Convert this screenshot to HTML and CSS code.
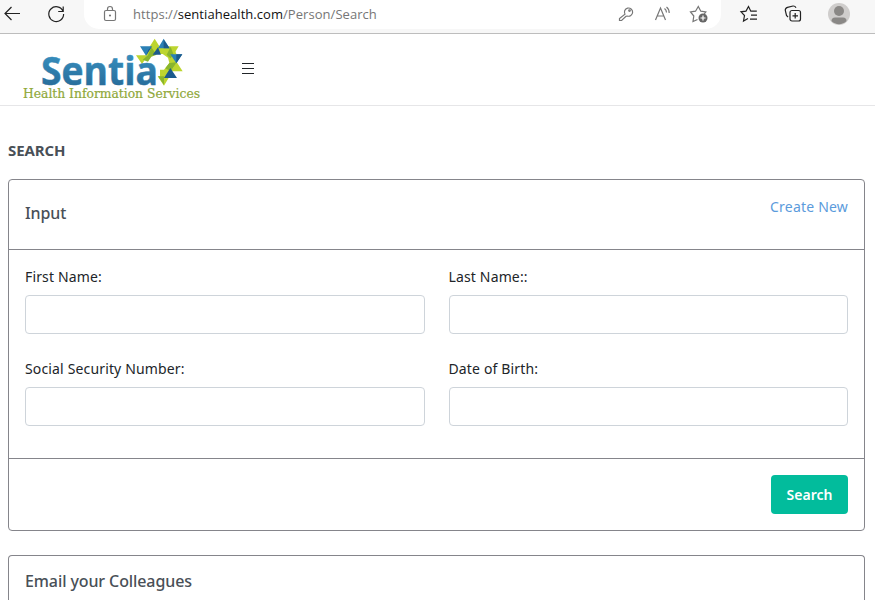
FILE: index.html
```html
<!DOCTYPE html>
<html lang="en">
<head>
    <meta charset="UTF-8">
    <meta name="viewport" content="width=device-width, initial-scale=1.0">
    <title>Person Search</title>
    <link rel="stylesheet" href="styles.css">
</head>
<body>
    <div class="browser-bar">
        <svg class="icon back" width="20" height="20" viewBox="0 0 20 20"><path d="M18 9.500H2.500M9.500 3L3 9.500 9.500 16"/></svg>
        <svg class="icon reload" width="20" height="20" viewBox="0 0 20 20"><path d="M17 7.2A7.4 7.4 0 1 0 17.6 10M17.2 2.5v5h-5"/></svg>
        <div class="address">
            <svg class="icon lock" width="14" height="18" viewBox="0 0 14 18"><rect x="1.500" y="5.500" width="11" height="10" rx="1.500"/><path d="M4.500 5.500V4a2.500 2.500 0 0 1 5 0v1.500"/><circle cx="7" cy="10.500" r=".5"/></svg>
            <div class="url">https://<span>sentiahealth.com</span>/Person/Search</div>
            <svg class="icon key" width="16" height="16" viewBox="0 0 16 16"><path d="M7 8.200A4.100 4.100 0 1 1 9.200 10L8 10.200 3.600 14.500H1.500v-2z"/><circle cx="11.500" cy="4.600" r=".8"/></svg>
            <svg class="icon read" width="18" height="18" viewBox="0 0 18 18"><path d="M2.500 15L7.500 3l5 12M4.200 11h6.600M11.500 3.500q2 1.500 2 4M13.500 2q2.700 2 2.700 6"/></svg>
            <svg class="icon star" width="20" height="20" viewBox="0 0 20 20"><path d="M8.500 15.500l-4.500 2 .8-5.500L1.500 8l5-.8L9.300 2.500l2.500 4.700 5 .8-1.500 1.800"/><circle class="dot" cx="14" cy="14" r="4.500"/><path class="plus" d="M14 11.500v5M11.500 14h5"/></svg>
        </div>
        <svg class="icon favorites" width="20" height="20" viewBox="0 0 20 20"><path d="M9 14.500L4.500 17l1-5.500L2 7.800l5-.7L9.500 2.500 11.800 7.200h6M12 11.200h6M11 15.200h7"/></svg>
        <svg class="icon collections" width="20" height="20" viewBox="0 0 20 20"><rect x="6" y="6.500" width="10.500" height="10.500" rx="2"/><path d="M11.200 9v5.500M8.500 11.800H14M4 13L2.500 11.500 1.300 6.500Q1 4 3.500 3.300L9 2q2-.2 3 1.800"/></svg>
        <svg class="avatar" width="22" height="22" viewBox="0 0 22 22"><circle cx="11" cy="11" r="11" fill="#cfcdcc"/><circle cx="11" cy="8" r="5" fill="#8a8886"/><path d="M3.500 18q0-3.500 3.500-3.500h8q3.500 0 3.500 3.500a10.500 10.500 0 0 1-15 0z" fill="#8a8886"/></svg>
    </div>

    <header class="site-header">
        <svg class="logo" width="180" height="66" viewBox="22 36 180 66">
            <defs>
                <linearGradient id="wordmark" x1="0" y1="0" x2="0" y2="1">
                    <stop offset="0" stop-color="#3d9bcb"/>
                    <stop offset="1" stop-color="#23628f"/>
                </linearGradient>
            </defs>
            <g transform="translate(136 37) scale(.3333)">
                <path fill="#bdd52f" d="M38 34L56 5l18 29zM92 28h36l-16 27zM0 55h36L18 81zM104 103h36l-18-28zM65 118h36l-17 28z"/>
                <path fill="#bdd52f" d="M30 30h82l11 25v22l-18 26-10 18H72V98h12l16-20-4-16-16-11H56L42 60 30 55z"/>
                <path fill="#8ab52d" d="M36 55l10-24 16 22-16 6-10 15-16-6zM92 53l12-24 9 25-10 10zM100 78l22-2-18 27-16-9zM66 118h18v26z"/>
                <path fill="#2b80b5" d="M66 34L83 5l18 29zM12 28h36L30 56zM103 52h36l-18 27z"/>
                <path fill="#1c5a8c" d="M50 53l16-22 9 22zM83 8v26h18zM30 56l7-18 11-10zM121 52h18l-18 27zM84 123l19-30 20 30z"/>
            </g>
            <text class="logo-name" x="41" y="85" textLength="117" lengthAdjust="spacingAndGlyphs" fill="url(#wordmark)">Sentia</text>
            <text class="logo-tagline" x="23" y="98" textLength="177" lengthAdjust="spacingAndGlyphs">Health Information Services</text>
        </svg>
        <svg class="menu" width="14" height="14" viewBox="0 0 14 14"><path d="M1 2.500h12M1 7.500h12M1 12.500h12"/></svg>
    </header>

    <main class="content">
        <h4 class="page-title">Search</h4>

        <form class="card">
            <div class="card-header">
                <h5>Input</h5>
                <a href="#">Create New</a>
            </div>
            <div class="card-body">
                <div class="form-group">
                    <label for="firstName">First Name:</label>
                    <input type="text" id="firstName">
                </div>
                <div class="form-group">
                    <label for="lastName">Last Name::</label>
                    <input type="text" id="lastName">
                </div>
                <div class="form-group">
                    <label for="ssn">Social Security Number:</label>
                    <input type="text" id="ssn">
                </div>
                <div class="form-group">
                    <label for="dob">Date of Birth:</label>
                    <input type="text" id="dob">
                </div>
            </div>
            <div class="card-footer">
                <button type="button">Search</button>
            </div>
        </form>

        <div class="card email">
            <h5>Email your Colleagues</h5>
        </div>
    </main>
</body>
</html>
```
FILE: styles.css
```css
* {
    box-sizing: border-box;
}
body {
    margin: 0;
    background: #fff;
    color: #212529;
    font-family: "Noto Sans", "Open Sans", sans-serif;
    font-size: 14px;
    line-height: 21px;
}
.browser-bar {
    display: flex;
    align-items: center;
    height: 34px;
    padding: 0 25px 5px 2px;
    background: #f7f7f7;
    border-bottom: 1px solid #bdbdbd;
}
.icon {
    flex: none;
    fill: none;
    stroke: #222;
    stroke-width: 1.2;
}
.reload {
    margin-left: 24px;
}
.address {
    display: flex;
    align-items: center;
    width: 637px;
    height: 29px;
    margin-left: 18px;
    padding-left: 19px;
    background: #fff;
    border-radius: 0 0 15px 15px;
}
.address .icon {
    stroke: #767676;
}
.url {
    width: 485px;
    margin-left: 16px;
    color: #767676;
    font-family: "Open Sans", sans-serif;
    font-size: 13px;
    letter-spacing: 0.05px;
    white-space: nowrap;
}
.url span {
    color: #111;
}
.read {
    margin-left: 19px;
}
.star {
    margin-left: 18px;
}
.address .star .dot {
    fill: #666;
    stroke: none;
}
.address .star .plus {
    stroke: #fff;
}
.favorites {
    margin-left: 18px;
}
.collections {
    margin-left: 25px;
}
.avatar {
    margin-left: 24px;
}
.site-header {
    display: flex;
    align-items: flex-start;
    height: 72px;
    padding: 2px 22px;
    border-bottom: 1px solid #e6e6e8;
}
.logo-name {
    font-family: "Open Sans", sans-serif;
    font-size: 40px;
    font-weight: 700;
    stroke: url(#wordmark);
    stroke-width: 0.5;
}
.logo-tagline {
    fill: #8fa83a;
    font-family: "DejaVu Serif", serif;
    font-size: 12px;
    stroke: #8fa83a;
    stroke-width: 0.2;
}
.menu {
    margin: 25px 0 0 39px;
    stroke: #212529;
    stroke-width: 1.2;
}
.content {
    padding: 34px 10px 0 8px;
}
.page-title {
    margin: 0 0 18px;
    color: #495057;
    font-family: "Open Sans", sans-serif;
    font-size: 15px;
    font-weight: 700;
    letter-spacing: -0.1px;
    text-transform: uppercase;
}
.card {
    margin-bottom: 24px;
    border: 1px solid #85858b;
    border-radius: 4px;
}
.card h5 {
    margin: 7px 0 0;
    color: #495057;
    font-size: 16px;
    font-weight: 500;
    letter-spacing: -0.1px;
}
.card-header {
    display: flex;
    justify-content: space-between;
    height: 70px;
    padding: 16px;
    border-bottom: 1px solid #85858b;
}
.card-header a {
    color: #5b9bdc;
    letter-spacing: 0.2px;
    text-decoration: none;
}
.card.email {
    height: 45px;
    margin-bottom: 0;
    padding: 15px 16px 0;
    border-bottom: none;
    border-radius: 4px 4px 0 0;
}
.email h5 {
    margin: 0;
}
.card-body {
    display: grid;
    grid-template-columns: 1fr 1fr;
    gap: 24px;
    height: 209px;
    padding: 16px;
    align-content: start;
    border-bottom: 1px solid #85858b;
}
.form-group label {
    display: block;
    margin-bottom: 8px;
    letter-spacing: 0.15px;
}
.form-group input {
    display: block;
    width: 100%;
    height: 39px;
    border: 1px solid #ced4da;
    border-radius: 4px;
}
.card-footer {
    display: flex;
    justify-content: flex-end;
    padding: 16px;
    height: 71px;
}
.card-footer button {
    width: 77px;
    height: 39px;
    border: none;
    border-radius: 4px;
    background: #02bc9c;
    color: #fff;
    font-family: inherit;
    font-size: 14px;
    font-weight: 600;
}
```
